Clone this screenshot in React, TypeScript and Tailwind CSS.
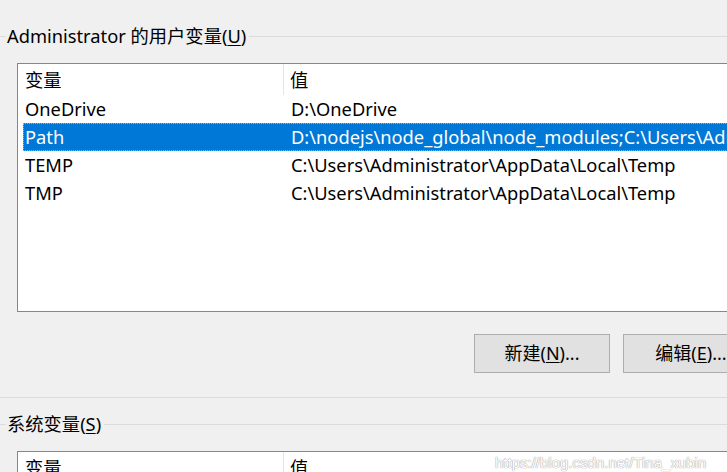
import React from 'react';

const font = { fontFamily: '"Noto Sans", "Noto Sans CJK SC", sans-serif' };

const userVars = [
  { name: 'OneDrive', value: 'D:\\OneDrive' },
  { name: 'Path', value: 'D:\\nodejs\\node_global\\node_modules;C:\\Users\\Administrator\\AppData\\Roaming\\npm', selected: true },
  { name: 'TEMP', value: 'C:\\Users\\Administrator\\AppData\\Local\\Temp' },
  { name: 'TMP', value: 'C:\\Users\\Administrator\\AppData\\Local\\Temp' },
];

const GroupTitle = ({ label, hotkey }: { label: string; hotkey: string }) => (
  <div className="flex items-center h-[28px]">
    <div className="w-[6px] h-px bg-[#dcdcdc]" />
    <span className="px-[1px] text-[18.3px] leading-none text-black whitespace-nowrap">
      {label}(<span className="underline underline-offset-2">{hotkey}</span>)
    </span>
    <div className="flex-1 h-px bg-[#dcdcdc] ml-[2px]" />
  </div>
);

const ListHeader = () => (
  <div className="flex h-[31px] items-center text-[18.3px] text-black">
    <div className="w-[266px] shrink-0 pl-[7px] h-full flex items-center border-r border-[#e5e5e5]">变量</div>
    <div className="pl-[6px]">值</div>
  </div>
);

const App = () => {
  return (
    <div style={font} className="w-[727px] h-[472px] overflow-hidden bg-[#f0f0f0] relative">
      <div className="pt-[22px]">
        <GroupTitle label="Administrator 的用户变量" hotkey="U" />
      </div>

      <div className="mt-[13px] ml-[17px] w-[800px] h-[249px] border border-[#828790] bg-white overflow-hidden">
        <ListHeader />
        {userVars.map((v) => (
          <div
            key={v.name}
            className={
              v.selected
                ? 'flex h-[28px] items-center ml-[5px] text-[18.3px] bg-[#0078d7] text-white outline outline-1 outline-dotted outline-[#e8a060] -outline-offset-1'
                : 'flex h-[28px] items-center ml-[5px] text-[18.3px] text-black'
            }
          >
            <div className="w-[261px] shrink-0 pl-[2px] whitespace-nowrap">{v.name}</div>
            <div className="pl-[7px] whitespace-nowrap">{v.value}</div>
          </div>
        ))}
      </div>

      <div className="flex mt-[22px] pl-[474px] gap-[13px]">
        <button className="w-[136px] h-[39px] shrink-0 border border-[#adadad] bg-[#e1e1e1] text-[18px] text-black">
          新建(<span className="underline underline-offset-2">N</span>)...
        </button>
        <button className="w-[136px] h-[39px] shrink-0 border border-[#adadad] bg-[#e1e1e1] text-[18px] text-black">
          编辑(<span className="underline underline-offset-2">E</span>)...
        </button>
      </div>

      <div className="mt-[24px] h-px bg-[#dcdcdc]" />

      <div className="pt-[12px]">
        <GroupTitle label="系统变量" hotkey="S" />
      </div>

      <div className="mt-[13px] ml-[17px] w-[800px] h-[120px] border border-[#828790] bg-white">
        <ListHeader />
      </div>

      <div
        className="absolute left-[495px] top-[452px] text-[15px] text-white whitespace-nowrap"
        style={{ fontFamily: '"Liberation Sans", sans-serif', textShadow: '0 0 1px #999, 0 0 1px #999' }}
      >
        https://blog.csdn.net/Tina_xubin
      </div>
    </div>
  );
};

export default App;
